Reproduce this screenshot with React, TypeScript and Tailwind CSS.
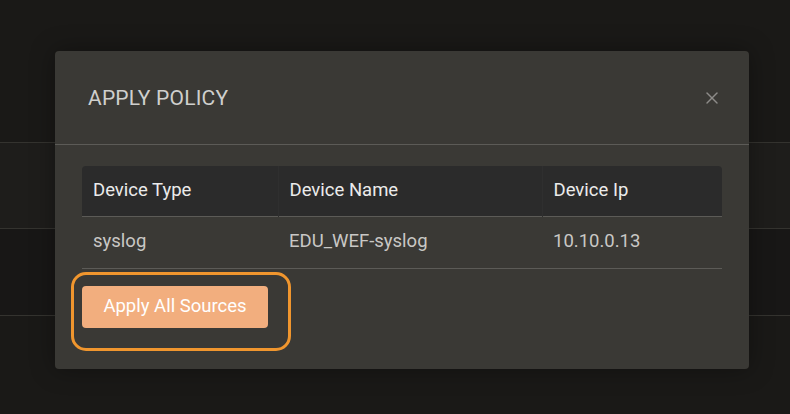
import { X } from "lucide-react"

const rows = [{ type: "syslog", name: "EDU_WEF-syslog", ip: "10.10.0.13" }]

export default function App() {
  return (
    <div className="relative h-[414px] w-[790px] overflow-hidden bg-[#1a1917] font-['Roboto',sans-serif]">
      {/* page behind the overlay */}
      <div className="flex flex-col pt-[142px]">
        <div className="h-[86px] border-t border-[#34332f] bg-[#1e1d1b]" />
        <div className="h-[87px] border-t border-[#34332f] bg-[#181716]" />
        <div className="border-t border-[#34332f]" />
      </div>

      <div className="absolute left-[55px] top-[51px] w-[694px] rounded-[4px] bg-[#3a3935] shadow-[0_0_24px_rgba(0,0,0,0.35)]">
        <div className="flex h-[94px] items-center justify-between border-b border-[#5c5b57] pl-[33px] pr-[27px]">
          <h2 className="pt-[2px] text-[21px] font-normal tracking-[0.2px] text-[#cfcfcd]">APPLY POLICY</h2>
          <button className="text-[#8d8c89]">
            <X className="h-[20px] w-[20px]" strokeWidth={1.7} />
          </button>
        </div>

        <div className="px-[27px] pb-[41px] pt-[21px]">
          <table className="w-full border-collapse text-left text-[18.5px]">
            <thead>
              <tr className="h-[50px] bg-[#2b2b2b] text-[#ebebeb]">
                <th className="w-[196px] rounded-tl-[4px] border-r border-[#2f2f2f] pl-[11px] font-normal">Device Type</th>
                <th className="w-[264px] border-r border-[#2f2f2f] pl-[11px] font-normal">Device Name</th>
                <th className="rounded-tr-[4px] pl-[11px] font-normal">Device Ip</th>
              </tr>
            </thead>
            <tbody>
              {rows.map((r) => (
                <tr key={r.ip} className="h-[52px] border-y border-[#5c5b57] text-[#c9c8c5]">
                  <td className="pl-[11px]">{r.type}</td>
                  <td className="pl-[11px]">{r.name}</td>
                  <td className="pl-[11px]">{r.ip}</td>
                </tr>
              ))}
            </tbody>
          </table>

          <div className="relative mt-[17px] w-fit">
            <button className="h-[42px] w-[186px] rounded-[4px] bg-[#f2ae7e] text-[18.5px] text-white">
              Apply All Sources
            </button>
            <div className="pointer-events-none absolute -left-[11px] -top-[14px] h-[79px] w-[220px] rounded-[15px] border-[3px] border-[#f0962e]" />
          </div>
        </div>
      </div>
    </div>
  )
}
